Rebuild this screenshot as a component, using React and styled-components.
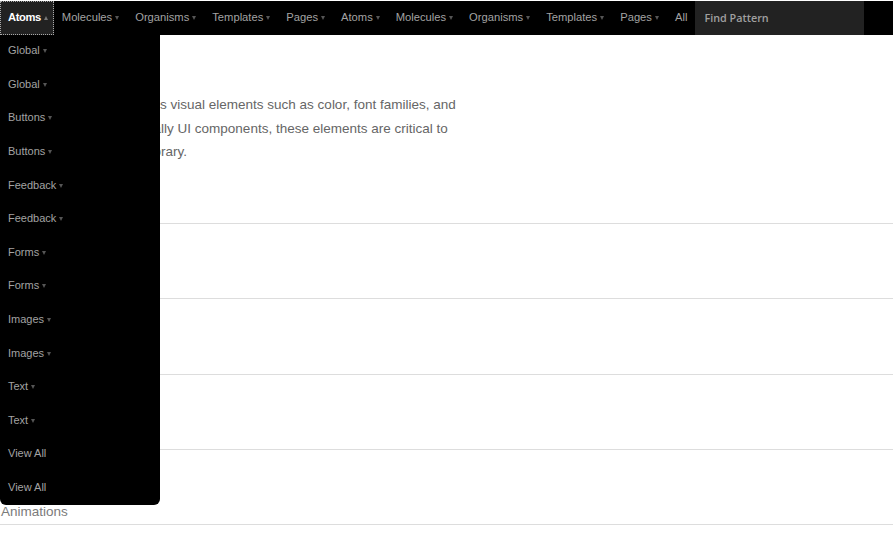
import React from 'react'
import styled, { createGlobalStyle } from 'styled-components'

const GlobalStyle = createGlobalStyle`
  html, body {
    margin: 0;
    padding: 0;
    background: #fff;
  }
  body {
    font-family: "Liberation Sans", Arial, Helvetica, sans-serif;
  }
  * {
    box-sizing: border-box;
  }
`

const Page = styled.div`
  padding-top: 1px;
  background: #fff;
  min-height: 545px;
`

const Header = styled.header`
  position: relative;
  z-index: 10;
  display: flex;
  align-items: stretch;
  height: 34px;
  background: #000;
`

const NavList = styled.ul`
  display: flex;
  align-items: stretch;
  margin: 0;
  padding: 0;
  list-style: none;
`

const NavItem = styled.li`
  position: relative;
  display: flex;
`

const NavLink = styled.a`
  display: flex;
  align-items: center;
  padding: ${p => (p.$active ? '0 5px 2px 7px' : '0 7px 2px')};
  font-size: 11.2px;
  font-weight: ${p => (p.$active ? 700 : 400)};
  letter-spacing: ${p => (p.$active ? '-0.4px' : '0')};
  color: ${p => (p.$active ? '#fff' : '#a3a3a3')};
  background: ${p => (p.$active ? '#222' : 'transparent')};
  border: ${p => (p.$active ? '1px dotted #aaa' : '1px solid transparent')};
  text-decoration: none;
  white-space: nowrap;
  cursor: pointer;
`

const Arrow = styled.span`
  display: inline-block;
  width: 0;
  height: 0;
  margin-left: 3px;
  border-left: 2.5px solid transparent;
  border-right: 2.5px solid transparent;
  ${p => (p.$up
    ? 'border-bottom: 4px solid #777;'
    : 'border-top: 4px solid #555;')}
  transform: translateY(1px);
`

const Search = styled.div`
  display: flex;
  align-items: center;
  width: 169px;
  padding: 0 0 1px 9px;
  background: #222;
  font-family: "Open Sans", "Liberation Sans", sans-serif;
  font-size: 10.8px;
  font-weight: 600;
  color: #a0a0a0;
`

const Dropdown = styled.ul`
  position: absolute;
  top: 100%;
  left: 0;
  width: 160px;
  margin: 0;
  padding: 0;
  list-style: none;
  background: #000;
  border-radius: 0 0 6px 6px;
`

const DropItem = styled.li`
  display: flex;
  align-items: center;
  height: 33.6px;
  padding: 0 0 3px 8px;
  font-size: 11px;
  color: #a3a3a3;
`

const Main = styled.main`
  color: #666;
`

const Intro = styled.section`
  height: 189px;
  padding-top: 20px;
  border-bottom: 1px solid #ddd;
`

const Title = styled.h1`
  margin: 0 0 12px;
  font-size: 22px;
  font-weight: 400;
  color: #555;
`

const Lead = styled.p`
  margin: 0;
  font-size: 13.5px;
  line-height: 23.5px;
  white-space: nowrap;
`

/* line openings that sit under the open menu, nudged so the cut falls on a letter edge */
const Tuck = styled.span`
  letter-spacing: ${p => p.$ls}px;
`

const Section = styled.section`
  display: flex;
  flex-direction: column;
  justify-content: flex-end;
  height: 75.3px;
  padding-bottom: 5px;
  border-bottom: 1px solid #ddd;
`

const SectionTitle = styled.h2`
  margin: 0;
  padding-left: 1px;
  font-size: 13.5px;
  font-weight: 400;
  color: #7b7b7b;
`

const navItems = [
  'Atoms', 'Molecules', 'Organisms', 'Templates', 'Pages',
  'Atoms', 'Molecules', 'Organisms', 'Templates', 'Pages',
]

const dropItems = [
  ['Global', true], ['Global', true], ['Buttons', true], ['Buttons', true],
  ['Feedback', true], ['Feedback', true], ['Forms', true], ['Forms', true],
  ['Images', true], ['Images', true], ['Text', true], ['Text', true],
  ['View All', false], ['View All', false],
]

const leadLines = [
  ['Design foundations include', -0.08, 's visual elements such as color, font families, and'],
  ['When combined into typica', -0.04, 'lly UI components, these elements are critical to'],
  ['crafting a consistent app lib', -0.09, 'rary.'],
]

const sections = ['Colors', 'Fonts', 'Visibility', 'Animations']

const App = () => {
  return (
    <Page>
      <GlobalStyle />
      <Header>
        <NavList>
          {navItems.map((name, i) => (
            <NavItem key={i}>
              <NavLink $active={i === 0}>
                {name}
                <Arrow $up={i === 0} />
              </NavLink>
              {i === 0 && (
                <Dropdown>
                  {dropItems.map(([label, sub], j) => (
                    <DropItem key={j}>
                      {label}
                      {sub && <Arrow />}
                    </DropItem>
                  ))}
                </Dropdown>
              )}
            </NavItem>
          ))}
          <NavItem>
            <NavLink>All</NavLink>
          </NavItem>
        </NavList>
        <Search>Find Pattern</Search>
      </Header>
      <Main>
        <Intro>
          <Title>Atoms</Title>
          <Lead>
            {leadLines.map(([hidden, ls, shown], i) => (
              <React.Fragment key={i}>
                {i > 0 && <br />}
                <Tuck $ls={ls}>{hidden}</Tuck>
                {shown}
              </React.Fragment>
            ))}
          </Lead>
        </Intro>
        {sections.map(name => (
          <Section key={name}>
            <SectionTitle>{name}</SectionTitle>
          </Section>
        ))}
      </Main>
    </Page>
  )
}

export default App
